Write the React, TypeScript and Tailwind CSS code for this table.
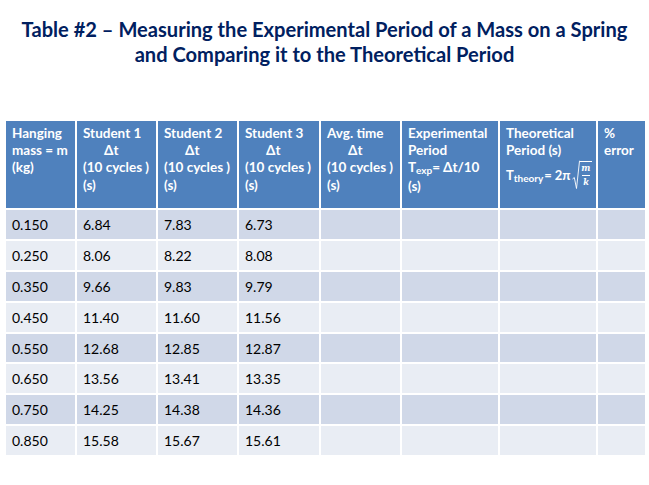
import React from 'react';

const ROWS = [
  ['0.150', '6.84', '7.83', '6.73'],
  ['0.250', '8.06', '8.22', '8.08'],
  ['0.350', '9.66', '9.83', '9.79'],
  ['0.450', '11.40', '11.60', '11.56'],
  ['0.550', '12.68', '12.85', '12.87'],
  ['0.650', '13.56', '13.41', '13.35'],
  ['0.750', '14.25', '14.38', '14.36'],
  ['0.850', '15.58', '15.67', '15.61'],
];

const HEAD = 'bg-[#4f81bd] px-[6px] pt-[4px] text-white font-bold text-[13.5px] leading-[17px] whitespace-nowrap';

function TimeHead({ title }: { title: string }) {
  return (
    <div className={HEAD}>
      <div>{title}</div>
      <div className="pl-[21px]">Δt</div>
      <div>(10 cycles )</div>
      <div className="mt-[1px]">(s)</div>
    </div>
  );
}

function Formula() {
  return (
    <div className="flex items-center mt-[1px] text-[13px] whitespace-nowrap">
      <span>T</span>
      <span className="text-[10px] mt-[7px]">theory</span>
      <span className="ml-[1px]">=</span>
      <span className="ml-[3px]">2π</span>
      <svg width="8" height="30" viewBox="0 0 8 30" className="ml-[1px] shrink-0">
        <path d="M0.5 19 L2.3 17.5 L4.5 28.5 L7.5 1 L8 1" fill="none" stroke="white" strokeWidth="0.9" />
      </svg>
      <div className="flex flex-col items-center border-t border-white mt-[-1px] px-[2px] font-serif italic text-[10px] leading-[13px] shrink-0">
        <span>m</span>
        <span className="border-t border-white w-full text-center">k</span>
      </div>
    </div>
  );
}

export default function App() {
  return (
    <div className="w-[649px] h-[485px] bg-white font-['Lato',sans-serif]">
      <h1 className="pt-[17px] text-center text-[#002060] font-bold text-[20.1px] leading-[25px]">
        Table #2 – Measuring the Experimental Period of a Mass on a Spring
        <br />
        and Comparing it to the Theoretical Period
      </h1>

      <div className="mt-[54px] ml-[6px] grid grid-cols-[69px_79px_79px_80px_79px_96px_96px_47px] gap-[2px]">
        {/* header */}
        <div className={`${HEAD} h-[87px]`}>
          <div>Hanging</div>
          <div>mass = m</div>
          <div>(kg)</div>
        </div>
        <TimeHead title="Student 1" />
        <TimeHead title="Student 2" />
        <TimeHead title="Student 3" />
        <TimeHead title="Avg. time" />
        <div className={HEAD}>
          <div>Experimental</div>
          <div>Period</div>
          <div className="flex items-baseline">
            T<span className="text-[10px] translate-y-[2px]">exp</span>= Δt/10
          </div>
          <div className="mt-[1px]">(s)</div>
        </div>
        <div className={HEAD}>
          <div>Theoretical</div>
          <div>Period (s)</div>
          <Formula />
        </div>
        <div className={HEAD}>
          <div>%</div>
          <div>error</div>
        </div>

        {ROWS.map((row, i) => {
          const bg = i % 2 === 0 ? 'bg-[#d0d8e8]' : 'bg-[#e9edf4]';
          return (
            <React.Fragment key={row[0]}>
              {row.map((cell, j) => (
                <div key={j} className={`${bg} h-[28.9px] px-[6px] flex items-center text-[14px] text-black`}>
                  {cell}
                </div>
              ))}
              {[0, 1, 2, 3].map((k) => (
                <div key={`e${k}`} className={`${bg} h-[28.9px]`} />
              ))}
            </React.Fragment>
          );
        })}
      </div>
    </div>
  );
}
